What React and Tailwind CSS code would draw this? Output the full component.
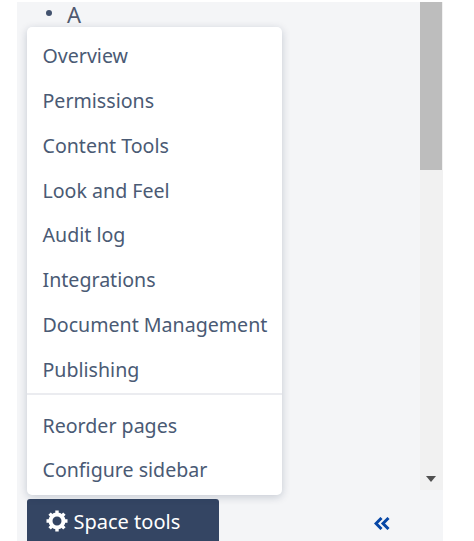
import React from "react";

const groupA = ["Overview", "Permissions", "Content Tools", "Look and Feel", "Audit log", "Integrations", "Document Management", "Publishing"];
const groupB = ["Reorder pages", "Configure sidebar"];

function Item({ label }) {
  return <div className="h-[44.8px] flex items-center pl-[15.5px] pt-[1px] whitespace-nowrap">{label}</div>;
}

export default function App() {
  return (
    <div className="w-[474px] h-[541px] bg-white overflow-hidden pt-[2px] pl-[17px] pr-[31px] [font-family:'Noto_Sans',sans-serif]">
      <div className="w-[426px] h-[539px] bg-[#f4f5f7] flex flex-col">
        <div className="flex h-[488px]">
          <div className="relative flex-1">
            <div className="flex items-center pl-[29px] h-[24px] text-[22px] text-[#505a6f]">
              <span className="w-[6px] h-[6px] rounded-full bg-[#42526e] mr-[15px] mb-[3px]" />
              <span>A</span>
            </div>
            <div className="absolute left-[10px] top-[25px] w-[255px] h-[468px] bg-white rounded-[5px] shadow-[0_2px_8px_rgba(9,30,66,0.2)] text-[19.6px] text-[#4a5a74] pt-[6px] flex flex-col">
              {groupA.map((l) => <Item key={l} label={l} />)}
              <div className="h-[2px] bg-[#ebecf0] mt-[2px] mb-[7px]" />
              {groupB.map((l) => <Item key={l} label={l} />)}
            </div>
          </div>
          <div className="w-[23px] bg-[#f1f1f1] flex flex-col items-center">
            <div className="w-[21.5px] h-[168px] bg-[#bdbdbd] self-start" />
            <div className="mt-auto mb-[8px] -ml-[2px] w-0 h-0 border-x-[5px] border-x-transparent border-t-[6px] border-t-[#505050]" />
          </div>
        </div>
        <div className="flex flex-1 mt-[9px] items-start">
          <div className="ml-[10px] w-[192px] h-[42px] bg-[#344563] rounded-t-[3px] text-white text-[20px] flex items-center pl-[17.5px] gap-[5px] pt-[3px]">
            <svg width="24" height="24" viewBox="0 0 24 24" fill="none" stroke="white" strokeWidth="4" strokeLinejoin="round" className="-mt-[1px]">
              <circle cx="12" cy="12" r="6.5" />
              <path strokeWidth="3.4" strokeLinecap="butt" d="M12 1.5v3M12 19.5v3M1.5 12h3M19.5 12h3M4.6 4.6l2.1 2.1M17.3 17.3l2.1 2.1M4.6 19.4l2.1-2.1M17.3 6.7l2.1-2.1" />
            </svg>
            <span>Space tools</span>
          </div>
          <svg className="ml-[155px] mt-[18px]" width="16" height="13" viewBox="0 0 16 13" fill="none" stroke="#0747a6" strokeWidth="3">
            <path d="M7.5 1L2 6.5 7.5 12M14.5 1L9 6.5 14.5 12" />
          </svg>
        </div>
      </div>
    </div>
  );
}
